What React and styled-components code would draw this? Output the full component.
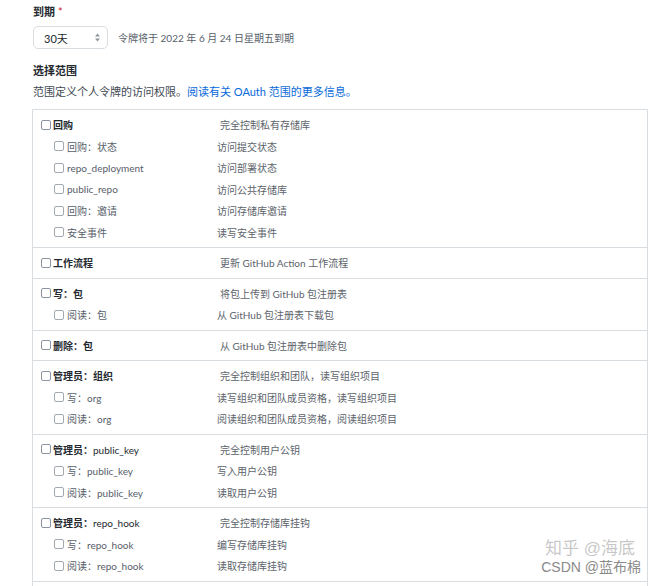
import styled, { createGlobalStyle } from 'styled-components';

const GlobalStyle = createGlobalStyle`
    body {
        margin: 0;
        background: #fff;
        font-family: Lato, "Noto Sans CJK SC", sans-serif;
        color: #24292f;
    }
`;

const Page = styled.div`
    position: relative;
    width: 655px;
    height: 586px;
    overflow: hidden;
    padding: 4px 9px 0 32px;
    box-sizing: border-box;
`;

const Label = styled.div`
    font-size: 11px;
    font-weight: 700;
    line-height: 16px;
    margin-left: 1px;

    & > span {
        color: #cf222e;
        font-weight: 400;
        margin-left: 3px;
    }
`;

const ExpireRow = styled.div`
    display: flex;
    align-items: center;
    gap: 10px;
    margin: 6px 0 0 1px;
`;

const Select = styled.div`
    width: 75px;
    height: 23px;
    box-sizing: border-box;
    border: 1px solid #d8dde2;
    border-radius: 5px;
    display: flex;
    align-items: center;
    justify-content: space-between;
    padding: 0 6px 0 10px;
    font-size: 11px;
    background: #fff;
`;

const Hint = styled.div`
    font-size: 10px;
    color: #57606a;
`;

const SectionTitle = styled(Label)`
    margin-top: 14px;
`;

const Note = styled.p`
    margin: 5px 0 0 1px;
    font-size: 11px;
    line-height: 16px;
    color: #424a53;

    & > a {
        color: #0969da;
        text-decoration: none;
    }
`;

const Table = styled.div`
    margin-top: 9px;
    border: 1px solid #d8dde2;
    border-bottom: none;
    width: 614px;
`;

const Group = styled.div`
    padding: 4px 0;
    min-height: ${(p) => (p.$tail ? '20px' : 'auto')};
    border-bottom: ${(p) => (p.$tail ? 'none' : '1px solid #d8dde2')};
`;

const Row = styled.div`
    display: flex;
    align-items: center;
    height: 21.5px;
    padding-left: ${(p) => (p.$child ? 21 : 8)}px;
    font-size: 10px;
`;

const Check = styled.span`
    width: 10px;
    height: 10px;
    border: 1px solid ${(p) => (p.$child ? '#a3a9b0' : '#8c959f')};
    border-radius: 2px;
    box-sizing: border-box;
    flex: none;
    margin-right: ${(p) => (p.$child ? 3 : 2)}px;
`;

const Name = styled.span`
    width: ${(p) => (p.$child ? 150 : 167)}px;
    color: ${(p) => (p.$child ? '#57606a' : '#24292f')};
    white-space: nowrap;

    & > b {
        font-weight: 700;
    }
`;

const Desc = styled.span`
    color: #5c636b;
    white-space: nowrap;
`;

const Watermark = styled.div`
    position: absolute;
    right: 14px;
    bottom: 10px;
    text-align: right;
    line-height: 1.2;
    font-family: "Liberation Sans", "Noto Sans CJK SC", sans-serif;
    pointer-events: none;
`;

const Zhihu = styled.div`
    font-size: 17px;
    color: rgba(150, 150, 150, 0.55);
    margin-right: 6px;
`;

const Csdn = styled.div`
    font-size: 14px;
    color: #8a8a8a;
    text-shadow: 0 0 2px #fff, 0 0 2px #fff;
`;

const SortIcon = () => (
    <svg width="7" height="9" viewBox="0 0 7 9">
        <path d="M3.5 0.5 L6 3.5 H1 Z M3.5 8.5 L6 5.5 H1 Z" fill="#8c959f" />
    </svg>
);

const groups = [
    [
        ['回购', '完全控制私有存储库'],
        ['回购：状态', '访问提交状态'],
        ['repo_deployment', '访问部署状态'],
        ['public_repo', '访问公共存储库'],
        ['回购：邀请', '访问存储库邀请'],
        ['安全事件', '读写安全事件'],
    ],
    [['工作流程', '更新 GitHub Action 工作流程']],
    [
        ['写：包', '将包上传到 GitHub 包注册表'],
        ['阅读：包', '从 GitHub 包注册表下载包'],
    ],
    [['删除：包', '从 GitHub 包注册表中删除包']],
    [
        ['管理员：组织', '完全控制组织和团队，读写组织项目'],
        ['写：org', '读写组织和团队成员资格，读写组织项目'],
        ['阅读：org', '阅读组织和团队成员资格，阅读组织项目'],
    ],
    [
        ['管理员：public_key', '完全控制用户公钥'],
        ['写：public_key', '写入用户公钥'],
        ['阅读：public_key', '读取用户公钥'],
    ],
    [
        ['管理员：repo_hook', '完全控制存储库挂钩'],
        ['写：repo_hook', '编写存储库挂钩'],
        ['阅读：repo_hook', '读取存储库挂钩'],
    ],
];

// parent scope names: CJK part bold, latin scope id regular
const ScopeName = ({ name, child }) => {
    if (child) return <Name $child>{name}</Name>;
    const m = name.match(/^(.*?)([A-Za-z_]+)$/);
    if (!m) return <Name><b>{name}</b></Name>;
    return (
        <Name>
            <b>{m[1]}</b>
            {m[2]}
        </Name>
    );
};

export default function App() {
    return (
        <>
            <GlobalStyle />
            <Page>
                <Label>
                    到期<span>*</span>
                </Label>
                <ExpireRow>
                    <Select>
                        30天
                        <SortIcon />
                    </Select>
                    <Hint>令牌将于 2022 年 6 月 24 日星期五到期</Hint>
                </ExpireRow>
                <SectionTitle>选择范围</SectionTitle>
                <Note>
                    范围定义个人令牌的访问权限。<a href="#">阅读有关 OAuth 范围的更多信息。</a>
                </Note>
                <Table>
                    {groups.map((rows, gi) => (
                        <Group key={gi}>
                            {rows.map(([name, desc], ri) => (
                                <Row key={name} $child={ri > 0}>
                                    <Check $child={ri > 0} />
                                    <ScopeName name={name} child={ri > 0} />
                                    <Desc>{desc}</Desc>
                                </Row>
                            ))}
                        </Group>
                    ))}
                    <Group $tail />
                </Table>
                <Watermark>
                    <Zhihu>知乎 @海底</Zhihu>
                    <Csdn>CSDN @蓝布棉</Csdn>
                </Watermark>
            </Page>
        </>
    );
}
